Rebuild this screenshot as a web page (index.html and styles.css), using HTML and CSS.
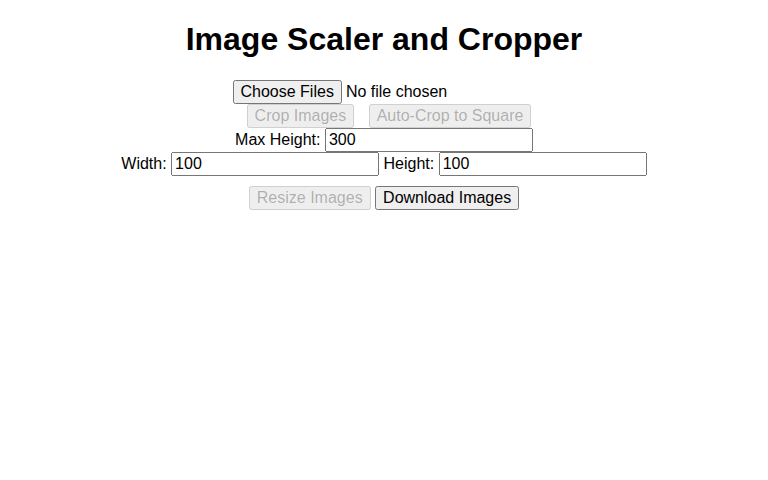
FILE: index.html
```html
<!DOCTYPE html>
<html>
<head>
<meta charset="utf-8">
<title>Image Scaler and Cropper</title>
<link rel="stylesheet" href="styles.css">
</head>
<body>
<h1 class="title">Image Scaler and Cropper</h1>
<div class="row"><input type="file" multiple class="file"></div>
<div class="row crop-row"><button class="btn" disabled>Crop Images</button> <button class="btn" disabled>Auto-Crop to Square</button></div>
<div class="row"><label>Max Height: <input type="text" class="field" value="300"></label></div>
<div class="row"><label>Width: <input type="text" class="field" value="100"></label> <label>Height: <input type="text" class="field" value="100"></label></div>
<div class="row actions"><button class="btn" disabled>Resize Images</button> <button class="btn">Download Images</button></div>
</body>
</html>
```
FILE: styles.css
```css
body {
  margin: 0 8px;
  font-family: "Liberation Sans", Arial, sans-serif;
  font-size: 16px;
  text-align: center;
  color: #000;
  background: #fff;
}
.title {
  font-size: 32px;
  font-weight: bold;
}
.file, .btn, .field {
  font-family: inherit;
  font-size: 16px;
}
.field {
  width: 200px;
}
.crop-row .btn {
  margin-left: 10px;
}
.actions {
  margin-top: 10px;
}
```
